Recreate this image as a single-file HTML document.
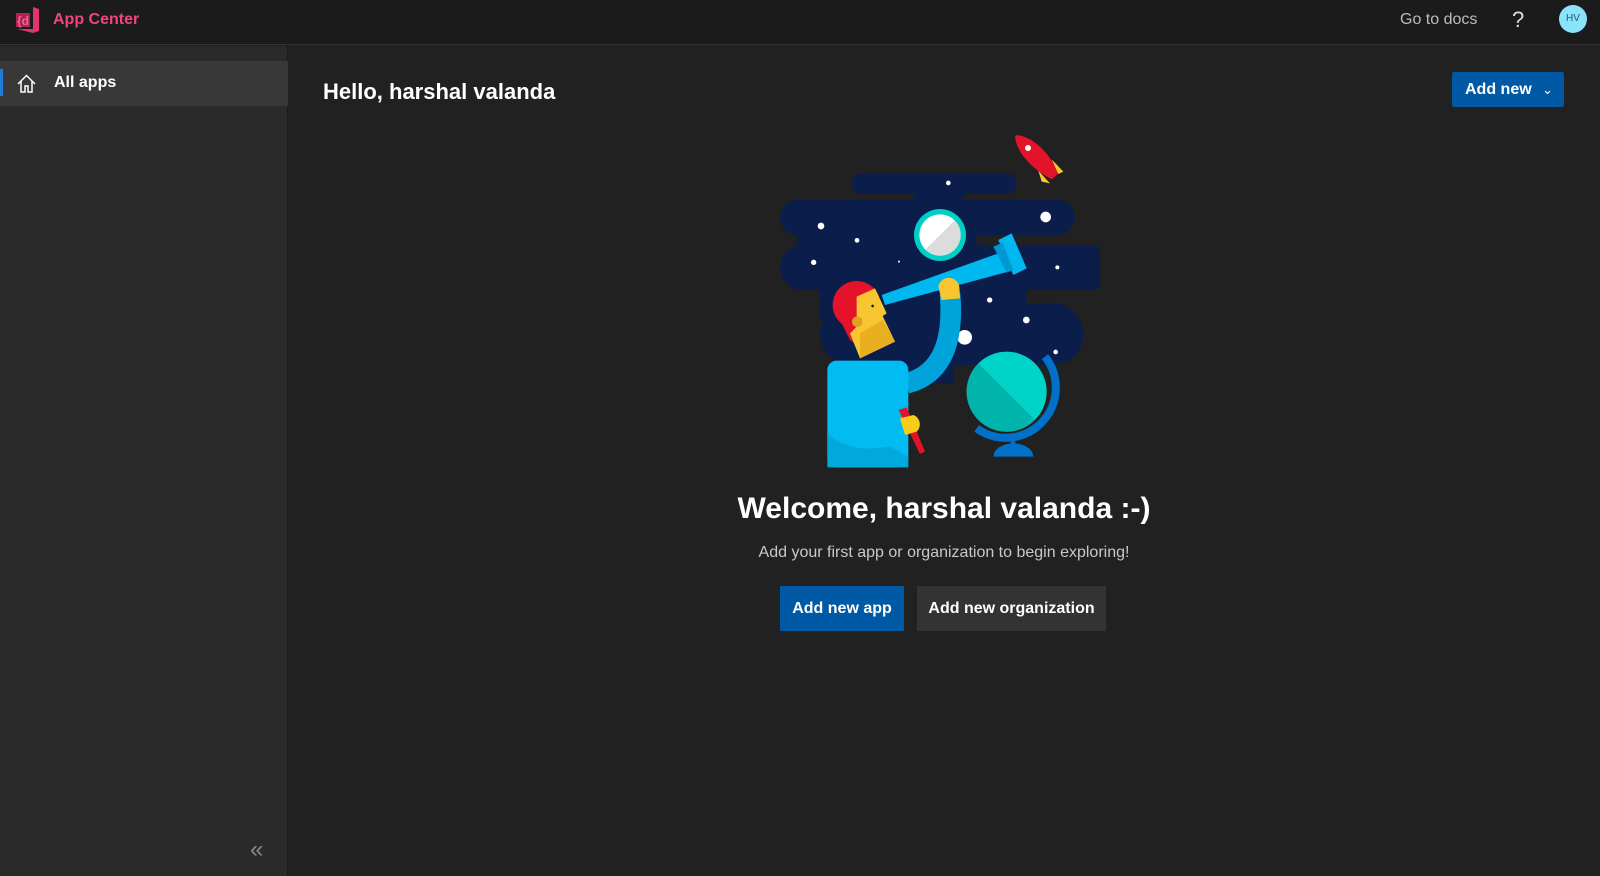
<!DOCTYPE html>
<html><head><meta charset="utf-8"><style>
*{margin:0;padding:0;box-sizing:border-box}
body{width:1600px;height:876px;background:#212121;font-family:"Liberation Sans",sans-serif;position:relative;overflow:hidden;color:#fff}
.hdr{position:absolute;left:0;top:0;width:1600px;height:45px;background:#1b1b1b;border-bottom:1px solid #333}
.side{position:absolute;left:0;top:46px;width:288px;height:830px;background:#2a2a2a;border-right:1px solid #1a1a1a}
.sel{position:absolute;left:0;top:15px;width:288px;height:45px;background:#383838}
.sel .bar{position:absolute;left:0;top:8px;width:3px;height:27px;background:#1f7ad8}
.btn{position:absolute;height:45px;font-weight:bold;font-size:16px;line-height:45px;text-align:center}
</style></head><body>
<div class="hdr">
 <svg style="position:absolute;left:13px;top:5px" width="28" height="28" viewBox="0 0 28 28">
  <path d="M20 2 L26 4 L26 26 L20 28 L4 24 L20 24 Z" fill="#e2336c"/>
  <path d="M3 8 h14 v14 h-14z" fill="#b02355"/>
  <text x="4" y="20" font-size="12" font-weight="bold" fill="#f06595" font-family="Liberation Sans">{d</text>
 </svg>
 <div style="position:absolute;left:53px;top:11px;font-size:16px;color:#f0467c;font-weight:bold">App Center</div>
 <div style="position:absolute;left:1400px;top:11px;font-size:16px;color:#bcbcbc">Go to docs</div>
 <div style="position:absolute;left:1512px;top:7px;font-size:22px;color:#ddd">?</div>
 <div style="position:absolute;left:1559px;top:5px;width:28px;height:28px;border-radius:50%;background:#8ae3f8;color:#1a5a78;font-size:10px;line-height:28px;text-align:center">HV</div>
</div>
<div class="side">
 <div class="sel"><div class="bar"></div>
  <svg style="position:absolute;left:16px;top:12px" width="21" height="21" viewBox="0 0 21 21"><path d="M2 11 L10.5 2.5 L19 11 M5 8.5 V19 H9 V13 H12 V19 H16 V8.5" fill="none" stroke="#fff" stroke-width="1.5"/></svg>
  <div style="position:absolute;left:54px;top:13px;font-size:16px;font-weight:bold">All apps</div>
 </div>
 <div style="position:absolute;left:250px;top:790px;font-size:24px;color:#888">«</div>
</div>
<div style="position:absolute;left:323px;top:79px;font-size:22px;font-weight:bold">Hello, harshal valanda</div>
<div style="position:absolute;left:1452px;top:72px;width:112px;height:35px;background:#0059a5;border-radius:2px;font-weight:bold;font-size:16px;line-height:35px;padding-left:13px">Add new <span style="font-weight:normal;font-size:13px;margin-left:6px">&#8964;</span></div>

<svg style="position:absolute;left:750px;top:120px" width="350" height="350" viewBox="0 0 1050 1050">
 <g fill="#0b1d4b">
  <rect x="305" y="160" width="495" height="62" rx="31"/>
  <rect x="490" y="215" width="150" height="40"/>
  <rect x="90" y="240" width="885" height="105" rx="52"/>
  <rect x="90" y="375" width="1000" height="135" rx="67"/>
  <rect x="140" y="300" width="540" height="120"/>
  <rect x="210" y="550" width="790" height="185" rx="92"/>
  <rect x="210" y="480" width="620" height="120"/>
  <rect x="470" y="700" width="140" height="90"/>
 </g>
 <g fill="#fff">
  <circle cx="213" cy="318" r="10"/><circle cx="321" cy="361" r="7"/><circle cx="191" cy="427" r="8"/><circle cx="447" cy="425" r="3"/><circle cx="595" cy="189" r="7"/><circle cx="887" cy="291" r="16"/><circle cx="922" cy="442" r="6"/><circle cx="719" cy="540" r="8"/><circle cx="829" cy="600" r="10"/><circle cx="644" cy="652" r="22"/><circle cx="917" cy="696" r="7"/>
 </g>
 <circle cx="570" cy="345" r="78" fill="#00cfc6"/>
 <circle cx="570" cy="345" r="62" fill="#fff"/>
 <path d="M614 301 A62 62 0 0 1 526 389 Z" fill="#dcdcdc"/>
 <path d="M395 525 L745 400 L775 455 L405 555Z" fill="#00b8f0"/>
 <path d="M745 360 L785 340 L830 445 L790 465Z" fill="#00b8f0"/>
 <path d="M730 380 L758 368 L790 450 L770 458Z" fill="#0098d0"/>
 <path d="M600 520 C610 640 590 760 470 790" fill="none" stroke="#00a4da" stroke-width="62"/>
 <path d="M565 500 A32 32 0 0 1 628 500 L630 535 L575 540Z" fill="#f8c630"/>
 <rect x="232" y="722" width="243" height="320" rx="28" fill="#00bcf2"/>
 <path d="M232 940 C300 1000 380 985 420 980 L475 1010 V1042 H232Z" fill="#00a8dc"/>
 <circle cx="320" cy="555" r="72" fill="#e5132a"/>
 <path d="M250 560 L300 660 L330 680 L320 560Z" fill="#e5132a"/>
 <path d="M320 530 L375 505 L410 580 L398 588 L435 665 L330 715 L300 640 L320 620Z" fill="#f8c630"/>
 <path d="M330 715 L435 665 L398 600 L330 640Z" fill="#e8b020"/>
 <circle cx="368" cy="558" r="4" fill="#0b1d4b"/>
 <circle cx="322" cy="605" r="16" fill="#e0a020"/>
 <path d="M446 870 L470 862 L525 995 L510 1002Z" fill="#e5132a"/>
 <path d="M450 895 L490 885 A30 30 0 0 1 500 935 L465 945Z" fill="#f8cd1a"/>
 <path d="M680 925 A150 150 0 0 0 885 710" fill="none" stroke="#0070c8" stroke-width="24"/>
 <circle cx="770" cy="815" r="120" fill="#00d4c8"/>
 <path d="M685 730 L855 900 A120 120 0 0 1 685 730Z" fill="#00b4ac"/>
 <path d="M730 1010 A60 40 0 0 1 850 1010Z" fill="#0070c8"/>
 <rect x="782" y="955" width="14" height="30" fill="#0070c8"/>
 <path d="M800 45 C850 50 900 100 925 160 L905 178 C850 150 800 100 795 50Z" fill="#e5132a"/>
 <circle cx="834" cy="84" r="9" fill="#fff"/>
 <path d="M905 118 L940 155 L925 162Z M865 152 L900 190 L875 185Z" fill="#f8c630"/>
</svg>

<div style="position:absolute;left:288px;width:1312px;top:492px;text-align:center;font-size:30px;font-weight:bold">Welcome, harshal valanda :-)</div>
<div style="position:absolute;left:288px;width:1312px;top:544px;text-align:center;font-size:16px;color:#c8c8c8">Add your first app or organization to begin exploring!</div>
<div class="btn" style="left:780px;top:586px;width:124px;background:#0059a5">Add new app</div>
<div class="btn" style="left:917px;top:586px;width:189px;background:#333">Add new organization</div>
</body></html>
